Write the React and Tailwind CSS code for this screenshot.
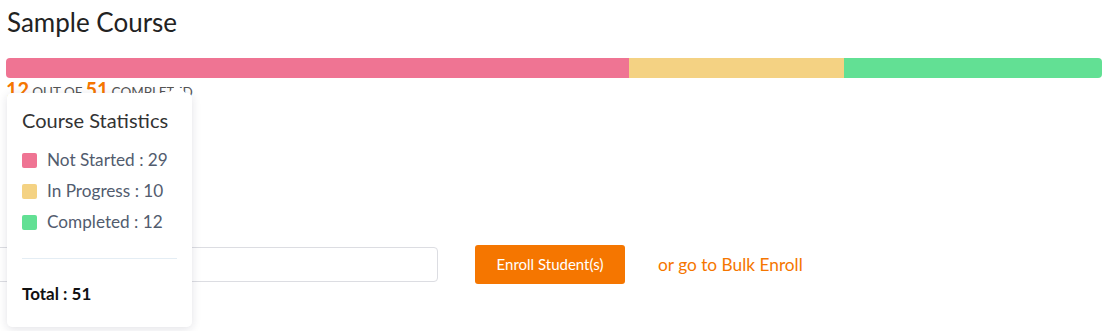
import React from 'react'

const stats = [
  { label: 'Not Started', value: 29, color: 'bg-[#ef7493]' },
  { label: 'In Progress', value: 10, color: 'bg-[#f4d283]' },
  { label: 'Completed', value: 12, color: 'bg-[#62e094]' },
]

export default function App(){
  return (
    <div className="relative h-[331px] w-[1113px] overflow-hidden bg-white font-['Lato','Liberation_Sans',sans-serif]">
      <div className="pl-[6px] pr-[11px] pt-[4px]">
        <h1 className="ml-[1px] text-[26px] leading-[36px] text-[#222]">Sample Course</h1>

        <div className="mt-[18px] flex h-[20px] w-full overflow-hidden rounded-[4px]">
          <div className="w-[623px] bg-[#ef7493]"></div>
          <div className="w-[215px] bg-[#f4d283]"></div>
          <div className="flex-1 bg-[#62e094]"></div>
        </div>

        <div className="flex h-[22px] items-baseline gap-[3px] leading-[23px] text-[#555]">
          <span className="text-[20px] font-bold text-[#f57600]">12</span>
          <span className="text-[13.5px] uppercase">out of</span>
          <span className="text-[20px] font-bold text-[#f57600]">51</span>
          <span className="text-[13.5px] uppercase">completed</span>
        </div>

        <div className="mt-[145px] flex items-center">
          <input className="-ml-[12px] h-[35px] w-[444px] rounded-[4px] border border-[#dcdde2] bg-white px-3 text-[14px] outline-none" />
          <button className="ml-[37px] h-[39px] w-[150px] rounded-[3px] bg-[#f57600] text-[15px] text-white">Enroll Student(s)</button>
          <a className="ml-[33px] text-[17.3px] text-[#f57600]" href="#">or go to Bulk Enroll</a>
        </div>
      </div>

      {/* stats popover */}
      <div className="absolute left-[7px] top-[93px] w-[185px] rounded-[5px] bg-white px-[15px] pt-[15px] pb-[22px] shadow-[0_2px_10px_rgba(30,30,60,0.13)]">
        <div className="absolute -top-[6px] left-[164px] h-[12px] w-[12px] rotate-45 bg-white"></div>
        <div className="relative text-[20px] leading-[24px] text-[#333]">Course Statistics</div>
        <div className="relative mt-[17px] flex flex-col gap-[9px]">
          {stats.map(s => (
            <div key={s.label} className="flex items-center gap-[10px] text-[17.2px] leading-[22px] text-[#525c6e]">
              <span className={`h-[15px] w-[15px] rounded-[2px] ${s.color}`}></span>
              <span>{s.label} : {s.value}</span>
            </div>
          ))}
        </div>
        <div className="mt-[25px] h-px bg-[#e4edf4]"></div>
        <div className="mt-[24px] text-[17px] font-bold leading-[22px] text-[#111]">Total : 51</div>
      </div>
    </div>
  )
}
